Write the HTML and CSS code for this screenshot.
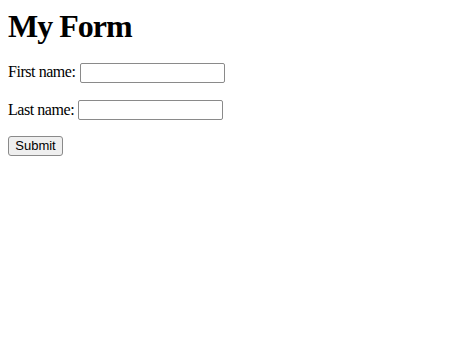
FILE: index.html
```html
<!DOCTYPE html>
<html>
<head>
<meta charset="utf-8">
<link rel="stylesheet" href="styles.css">
<title>My Form</title>
</head>
<body class="page">
<h1 class="title">My Form</h1>
<form class="form">
  <p class="row"><label class="label" for="first">First name:</label> <input class="field" type="text" id="first" name="first"></p>
  <p class="row"><label class="label" for="last">Last name:</label> <input class="field" type="text" id="last" name="last"></p>
  <p class="row row-submit"><button class="submit" type="submit">Submit</button></p>
</form>
</body>
</html>
```
FILE: styles.css
```css
html { background: #fff; }
.page {
  margin: 8px;
  font-family: "Liberation Serif", "Times New Roman", serif;
  font-size: 16px;
  color: #000;
}
.title {
  font-size: 32px;
  font-weight: bold;
  margin: 0 0 16px;
  line-height: 37px;
  letter-spacing: -1px;
}
.form { margin: 0; }
.row {
  margin: 0 0 16px;
  line-height: 21px;
}
.label {
  letter-spacing: -0.45px;
}
.field {
  box-sizing: border-box;
  width: 145px;
  height: 20px;
  border: 1px solid #8a8a8a;
  border-radius: 2px;
  padding: 1px 3px;
  font-family: "Liberation Sans", Arial, sans-serif;
  font-size: 13px;
  background: #fff;
  vertical-align: baseline;
  margin: 0;
}
.row-submit {
  margin-top: -2px;
}
.submit {
  box-sizing: border-box;
  width: 55px;
  height: 20px;
  border: 1px solid #8a8a8a;
  border-radius: 3px;
  background: #efefef;
  font-family: "Liberation Sans", Arial, sans-serif;
  font-size: 13px;
  color: #000;
  padding: 0 6px;
  margin: 0;
}
```
